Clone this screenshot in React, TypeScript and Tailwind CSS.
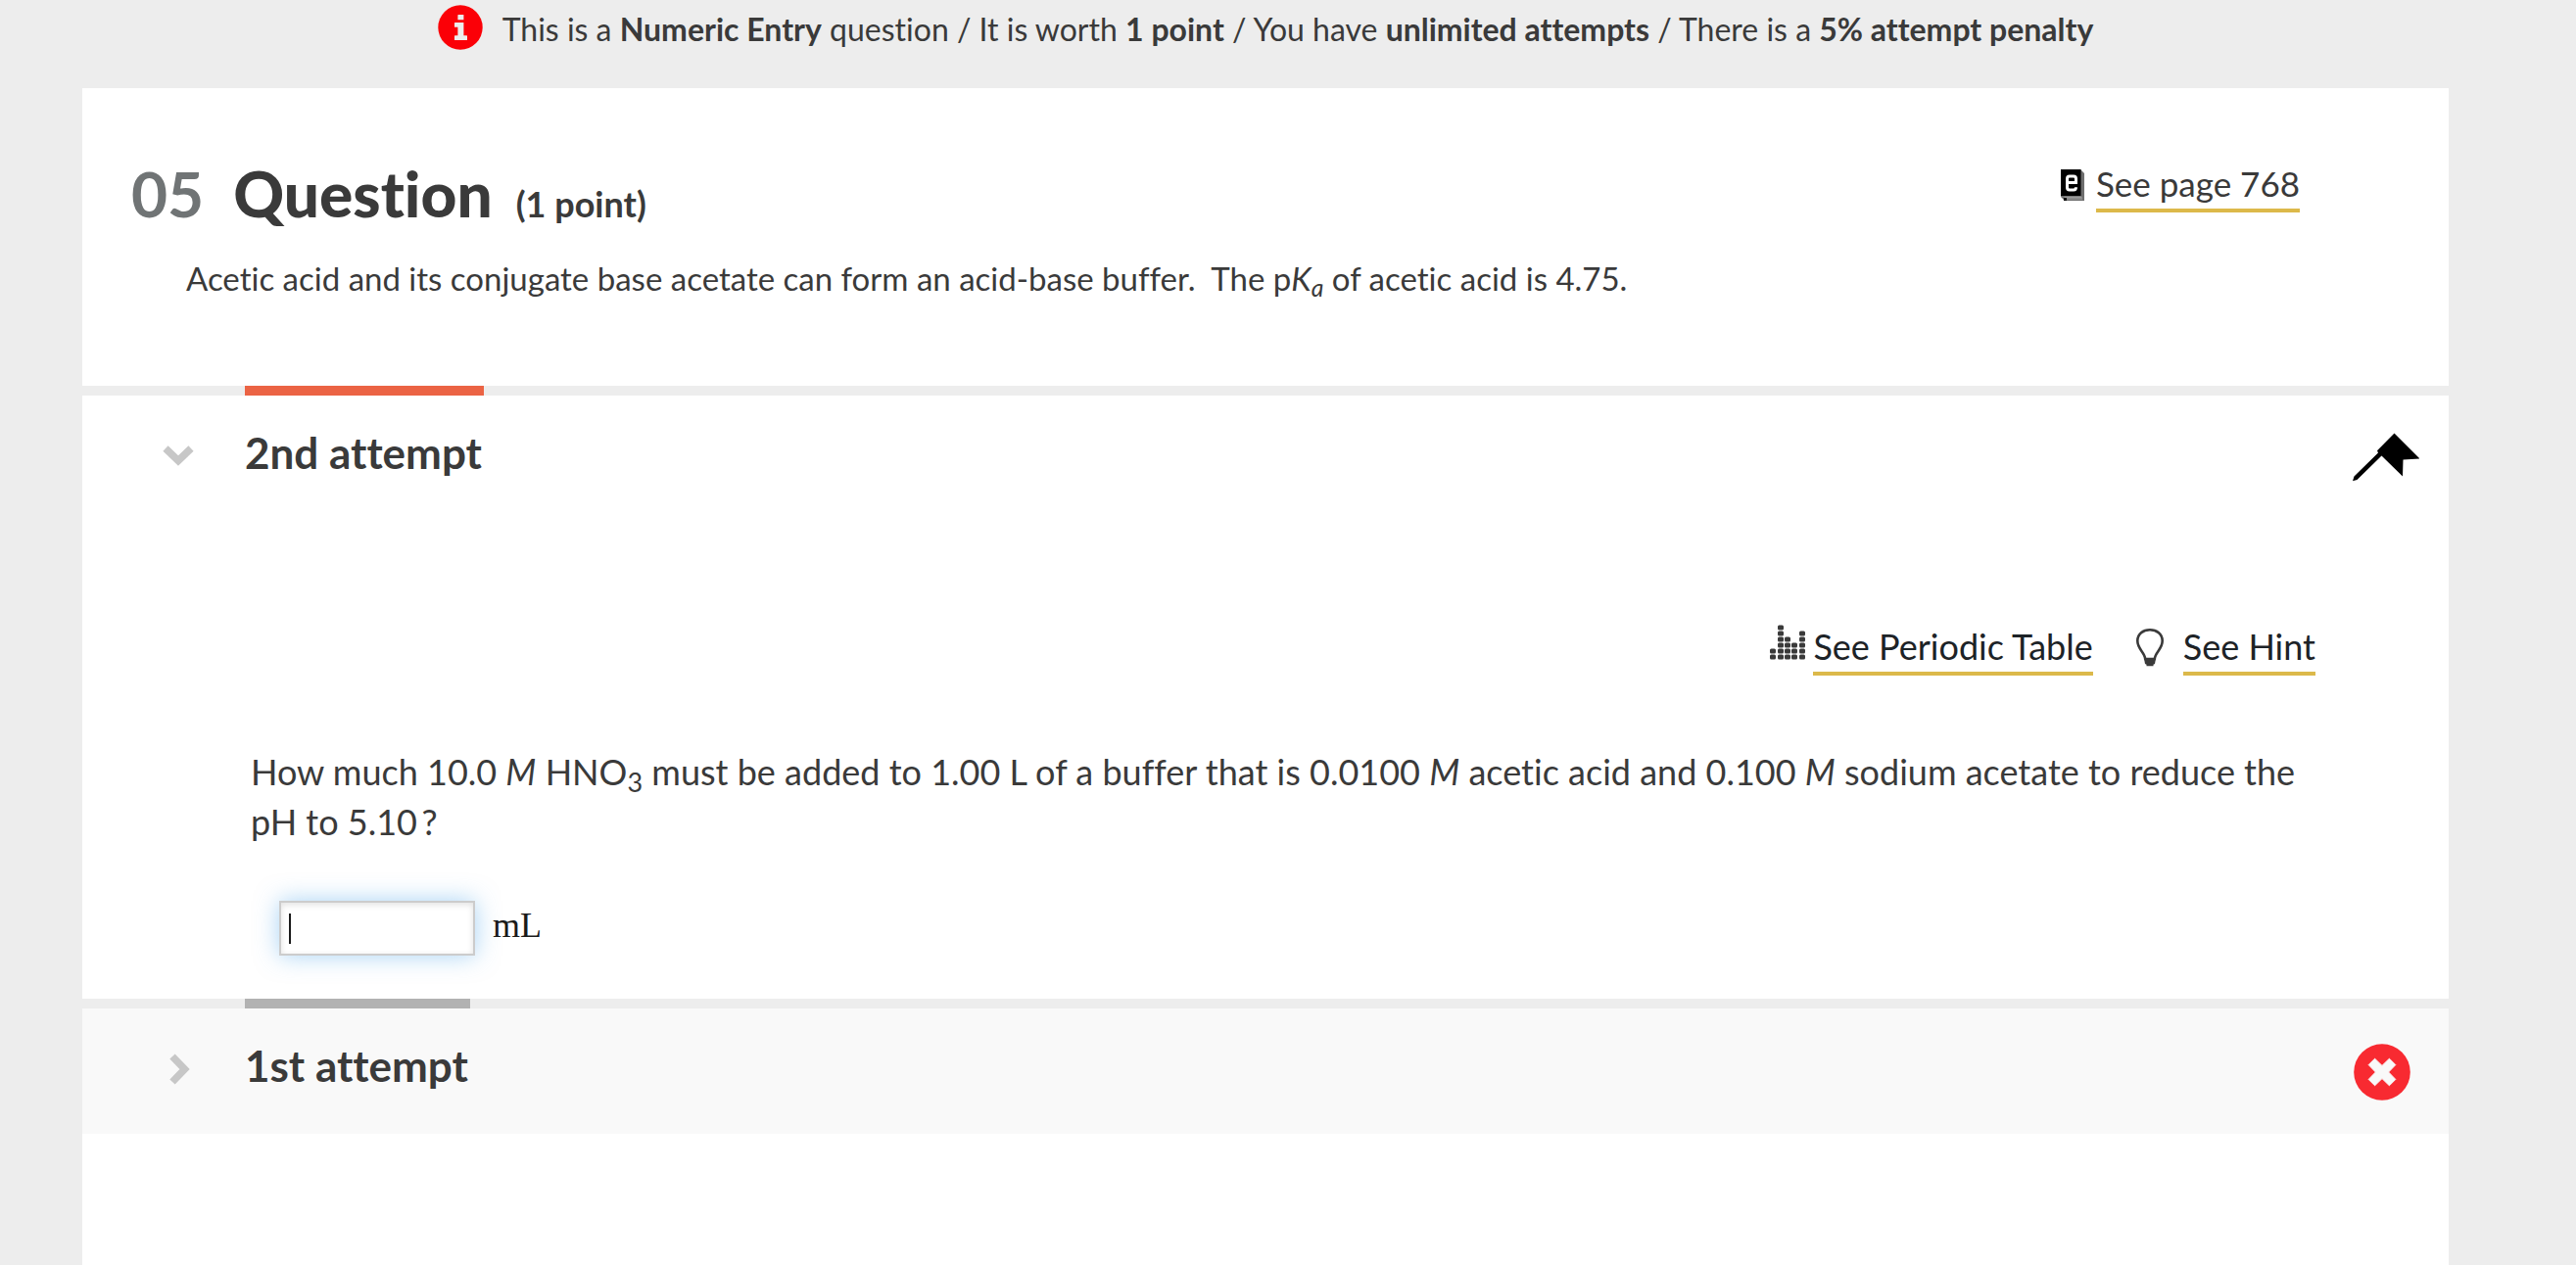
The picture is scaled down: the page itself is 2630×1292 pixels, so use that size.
import type { ReactNode } from "react";

const BAR_COLUMNS = [
  { x: 0, dots: 2 },
  { x: 8, dots: 6 },
  { x: 15, dots: 4 },
  { x: 22, dots: 3 },
  { x: 30, dots: 5 },
];

function InfoIcon() {
  return (
    <svg viewBox="0 0 46 46" className="size-[46px] shrink-0" aria-hidden="true">
      <circle cx="23" cy="23" r="22.7" fill="#fb0007" />
      <path
        d="M21 10h5.4v5.3H20.4V10.6Q20.4 10 21 10ZM17.6 18H26.4V31.2H29.4Q30 31.2 30 31.8V35.4Q30 36 29.4 36H17.6Q17 36 17 35.4V31.8Q17 31.2 17.6 31.2H20.4V22.8H17.6Q17 22.8 17 22.2V18.6Q17 18 17.6 18Z"
        fill="#ededed"
      />
    </svg>
  );
}

function BookIcon() {
  return (
    <svg viewBox="0 0 24 32" className="h-8 w-6" aria-hidden="true">
      <path d="M20 0 24 4V32H4L0 28V0Z" fill="#6e6e6e" />
      <path d="M0 0H20.5V27H0Z" fill="#000" />
      <path d="M3.5 28.3H21.5M4 30H22" stroke="#b8b8b8" strokeWidth="0.8" />
      <path d="M3 29H6V32H3Z" fill="#111" />
      <path
        d="M6 13.5H15.5V9.5Q15.5 7 13 7H9Q6.5 7 6.5 9.5V18.5Q6.5 21 9 21H13Q15.5 21 15.5 18.3"
        fill="none"
        stroke="#fff"
        strokeWidth="3"
      />
    </svg>
  );
}

function BarsIcon() {
  return (
    <svg viewBox="0 0 36 36" className="size-9" fill="#3a3a3a" aria-hidden="true">
      {BAR_COLUMNS.map(({ x, dots }) =>
        Array.from({ length: dots }, (_, i) => (
          <rect key={`${x}-${i}`} x={x} y={30.5 - i * 6} width="6" height="5" rx="1.5" />
        ))
      )}
    </svg>
  );
}

function BulbIcon() {
  return (
    <svg viewBox="0 0 28 39" className="h-[39px] w-7" aria-hidden="true">
      <path
        d="M9.2 31C8.6 24 1.3 21 1.3 12.6C1.3 5.5 7 1.3 14 1.3S26.7 5.5 26.7 12.6C26.7 21 19.4 24 18.8 31Z"
        fill="none"
        stroke="#3a3a3a"
        strokeWidth="2.6"
      />
      <path d="M8 30.5H20L19 36L17.5 36.8V38.3H10.5V36.8L9 36Z" fill="#3a3a3a" />
    </svg>
  );
}

function PinIcon() {
  return (
    <svg viewBox="0 0 68 50" className="h-[50px] w-[68px]" aria-hidden="true">
      <path
        d="M42.5 0.5 68.5 26.5 51.5 27.5 51 44.5 29.5 23.5 4.5 48 0 49.2 1.5 44.5 26 20.5 25 18.2Z"
        fill="#000"
      />
    </svg>
  );
}

function WrongIcon() {
  return (
    <svg viewBox="0 0 58 58" className="size-[58px]" role="img" aria-label="Incorrect">
      <circle cx="29" cy="29" r="28.8" fill="#f82a31" />
      <path
        d="M21.6 15.2 29 22.4 36.4 15.2 42.8 21.6 35.6 29 42.8 36.4 36.4 42.8 29 35.6 21.6 42.8 15.2 36.4 22.4 29 15.2 21.6Z"
        fill="#f9f9f9"
        stroke="#f9f9f9"
        strokeLinejoin="round"
      />
    </svg>
  );
}

function Chevron({ open }: { open: boolean }) {
  return (
    <svg viewBox="0 0 32 32" className="mt-2 size-8" aria-hidden="true">
      <path
        d={open ? "M3 8 16 20.5 29 8" : "M10 3 22.5 16 10 29"}
        fill="none"
        stroke="#c7c7c7"
        strokeWidth="7.5"
      />
    </svg>
  );
}

function ResourceLink({ icon, children }: { icon: ReactNode; children: ReactNode }) {
  return (
    <a href="#" className="flex items-start leading-[44px]">
      {icon}
      <span className="border-b-4 border-[#dcb94a] pb-1">{children}</span>
    </a>
  );
}

interface AttemptHeaderProps {
  title: string;
  open: boolean;
  action: ReactNode;
}

function AttemptHeader({ title, open, action }: AttemptHeaderProps) {
  return (
    <div className="flex items-start justify-between pt-[31px] pl-[82px]">
      <button type="button" aria-expanded={open} className="flex items-center gap-[52px]">
        <Chevron open={open} />
        <span className="text-[44px] leading-[54px] font-bold">{title}</span>
      </button>
      {action}
    </div>
  );
}

export default function App() {
  return (
    <div className="flex min-h-screen flex-col bg-[#ededed] pr-[130px] pl-[84px] font-['Lato',sans-serif] text-[#3a3a3a] [font-variant-ligatures:none]">
      {/* Question info */}
      <div className="flex items-start justify-center gap-5 pt-[5px] pb-[35px]">
        <InfoIcon />
        <p className="text-[32px] leading-[50px]">
          This is a <b>Numeric Entry</b> question / It is worth <b>1 point</b> / You have{" "}
          <b>unlimited attempts</b> / There is a <b>5% attempt penalty</b>
        </p>
      </div>

      <main className="flex-1 bg-white">
        {/* Question stem */}
        <section className="pt-[70px] pb-[85px] pl-[50px]">
          <div className="flex items-start justify-between pr-[152px]">
            <h1 className="flex items-baseline text-[64px] leading-[76px] font-black">
              <span className="mr-[30px] font-bold text-[#707475]">05</span>
              Question
              <span className="ml-6 text-[36px] leading-[44px] font-bold">(1 point)</span>
            </h1>
            <div className="mt-[5px] text-[35px]">
              <ResourceLink
                icon={
                  <span className="mt-2 mr-3">
                    <BookIcon />
                  </span>
                }
              >
                See page 768
              </ResourceLink>
            </div>
          </div>
          <p className="mt-[23px] pl-14 text-[33px] leading-[50px]">
            Acetic acid and its conjugate base acetate can form an acid-base buffer.&nbsp; The p<i>K</i>
            <sub>
              <i>a</i>
            </sub>{" "}
            of acetic acid is 4.75.
          </p>
        </section>

        {/* Current attempt */}
        <section>
          <div className="h-2.5 bg-[#ededed] pl-[166px]">
            <div className="h-full w-[244px] bg-[#eb6344]" />
          </div>
          <AttemptHeader
            title="2nd attempt"
            open
            action={
              <button type="button" aria-label="Pin attempt" className="mt-[7px] mr-[30px]">
                <PinIcon />
              </button>
            }
          />
          <div className="mt-[146px] flex justify-end gap-11 pr-[136px] text-[36px] text-[#1d2327]">
            <ResourceLink
              icon={
                <span className="mr-2">
                  <BarsIcon />
                </span>
              }
            >
              See Periodic Table
            </ResourceLink>
            <ResourceLink
              icon={
                <span className="mt-1 mr-5">
                  <BulbIcon />
                </span>
              }
            >
              See Hint
            </ResourceLink>
          </div>
          <p className="mt-[73px] pr-[136px] pl-[172px] text-[36px] leading-[51px]">
            How much 10.0 <i>M</i> HNO<sub>3</sub> must be added to 1.00 L of a buffer that is 0.0100 <i>M</i>{" "}
            acetic acid and 0.100 <i>M</i> sodium acetate to reduce the pH to 5.10&#8201;?
          </p>
          <div className="mt-[55px] flex items-start pb-11 pl-[201px]">
            <div className="relative">
              <input
                id="answer"
                type="text"
                className="block h-14 w-[200px] border-2 border-[#cccccc] bg-white px-2 text-[32px] shadow-[inset_0_2px_6px_rgba(0,0,0,0.12),0_0_24px_rgba(82,168,236,0.5)] outline-none"
              />
              <span className="pointer-events-none absolute top-[13px] left-2.5 h-[31px] w-0.5 bg-[#1a1a1a]" />
            </div>
            <label
              htmlFor="answer"
              className="ml-[18px] font-['Liberation_Serif',serif] text-[36px] leading-[50px] text-[#1a1a1a]"
            >
              mL
            </label>
          </div>
        </section>

        {/* Previous attempt */}
        <section className="bg-[#f9f9f9] pb-[34px]">
          <div className="h-2.5 bg-[#ededed] pl-[166px]">
            <div className="h-full w-[230px] bg-[#b2b2b2]" />
          </div>
          <AttemptHeader
            title="1st attempt"
            open={false}
            action={
              <span className="mt-[5px] mr-[39px]">
                <WrongIcon />
              </span>
            }
          />
        </section>
      </main>
    </div>
  );
}
